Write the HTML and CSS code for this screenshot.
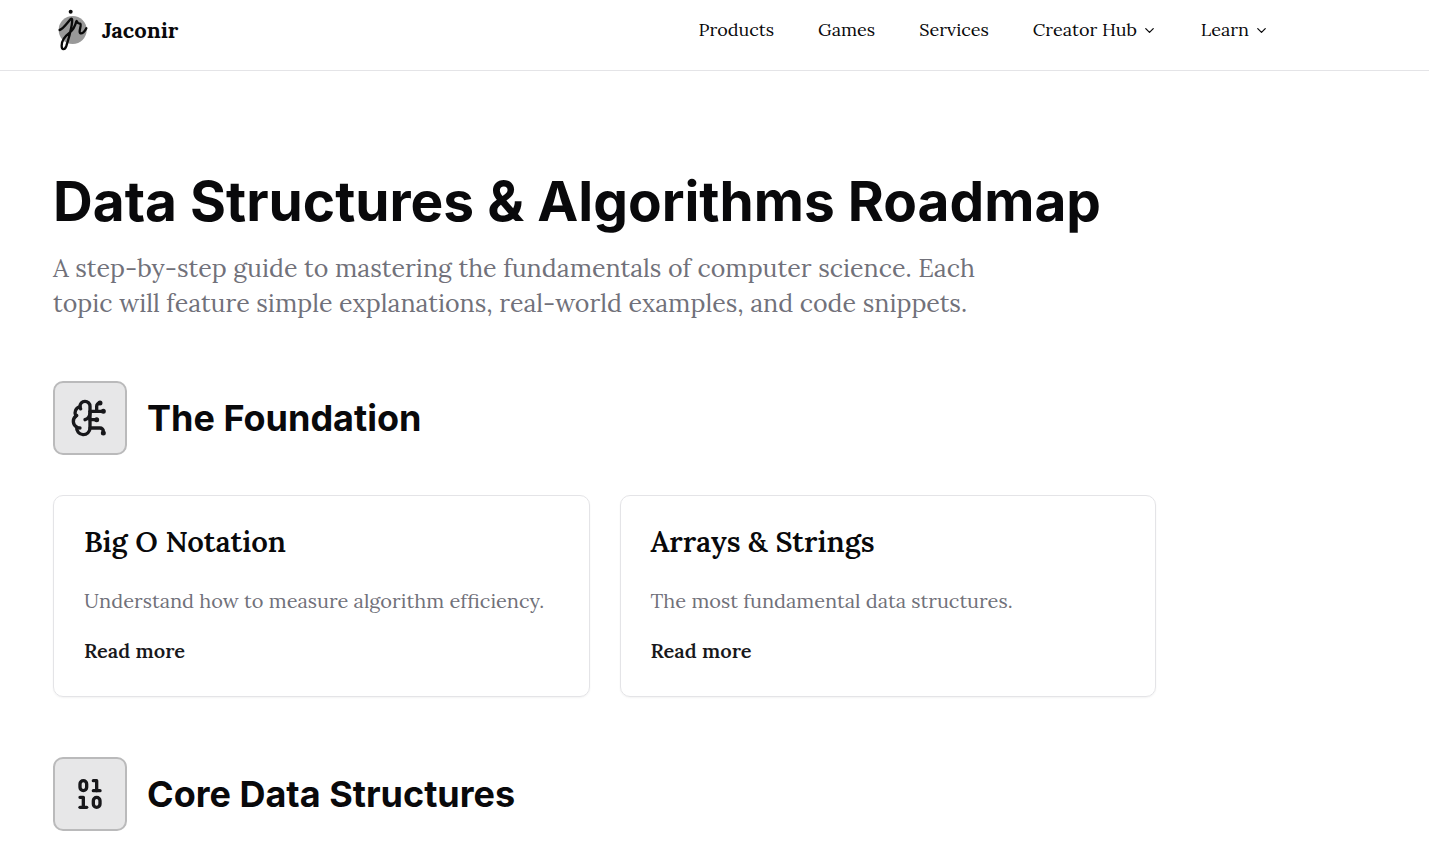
FILE: index.html
```
<!DOCTYPE html>
<html lang="en">
<head>
    <meta charset="UTF-8">
    <meta name="viewport" content="width=device-width, initial-scale=1.0">
    <title>Data Structures & Algorithms Roadmap - Jaconir</title>
    <link rel="stylesheet" href="styles.css">
</head>
<body>
    <header class="site-header">
        <a class="brand" href="#">
            <svg class="brand-logo" viewBox="54 27 90 126" aria-hidden="true">
                <circle cx="98" cy="90" r="42" fill="#999"/>
                <circle cx="92" cy="35" r="6" fill="#0a0a0a"/>
                <path d="M59 90C70 87 83 67 92 57C98 53 97 64 95 76C91 98 86 118 79 138C74 151 65 150 65 137C65 119 76 108 88 99C101 89 106 77 109 64C112 60 110 72 120 71C127 73 115 94 120 99C126 103 135 94 139 85" fill="none" stroke="#0a0a0a" stroke-width="7" stroke-linecap="round" stroke-linejoin="round"/>
            </svg>
            <span class="brand-name">Jaconir</span>
        </a>
        <nav class="main-nav">
            <a class="nav-link" href="#">Products</a>
            <a class="nav-link" href="#">Games</a>
            <a class="nav-link" href="#">Services</a>
            <button class="nav-link" type="button">Creator Hub
                <svg class="chevron" viewBox="0 0 24 24" aria-hidden="true"><path d="m6 9 6 6 6-6"/></svg>
            </button>
            <button class="nav-link" type="button">Learn
                <svg class="chevron" viewBox="0 0 24 24" aria-hidden="true"><path d="m6 9 6 6 6-6"/></svg>
            </button>
        </nav>
    </header>

    <main class="container">
        <div class="intro">
            <h1>Data Structures &amp; Algorithms Roadmap</h1>
            <p>A step-by-step guide to mastering the fundamentals of computer science. Each topic will feature simple explanations, real-world examples, and code snippets.</p>
        </div>

        <section class="topic">
            <div class="topic-header">
                <div class="topic-icon">
                    <svg viewBox="0 0 24 24" aria-hidden="true">
                        <path d="M12 5a3 3 0 1 0-5.997.125 4 4 0 0 0-2.526 5.77 4 4 0 0 0 .556 6.588A4 4 0 1 0 12 18Z"/>
                        <path d="M9 13a4.5 4.5 0 0 0 3-4"/>
                        <path d="M6.003 5.125A3 3 0 0 0 6.401 6.5"/>
                        <path d="M3.477 10.896a4 4 0 0 1 .585-.396"/>
                        <path d="M6 18a4 4 0 0 1-1.967-.516"/>
                        <path d="M12 13h4"/>
                        <path d="M12 18h6a2 2 0 0 1 2 2v1"/>
                        <path d="M12 8h8"/>
                        <path d="M16 8V5a2 2 0 0 1 2-2"/>
                        <circle cx="16" cy="13" r=".5"/>
                        <circle cx="18" cy="3" r=".5"/>
                        <circle cx="20" cy="21" r=".5"/>
                        <circle cx="20" cy="8" r=".5"/>
                    </svg>
                </div>
                <h2>The Foundation</h2>
            </div>
            <div class="card-grid">
                <article class="card">
                    <h3>Big O Notation</h3>
                    <p>Understand how to measure algorithm efficiency.</p>
                    <a class="read-more" href="#">Read more</a>
                </article>
                <article class="card">
                    <h3>Arrays &amp; Strings</h3>
                    <p>The most fundamental data structures.</p>
                    <a class="read-more" href="#">Read more</a>
                </article>
            </div>
        </section>

        <section class="topic">
            <div class="topic-header">
                <div class="topic-icon">
                    <svg viewBox="0 0 24 24" aria-hidden="true">
                        <rect x="14" y="14" width="4" height="6" rx="2"/>
                        <rect x="6" y="4" width="4" height="6" rx="2"/>
                        <path d="M6 20h4"/>
                        <path d="M14 10h4"/>
                        <path d="M6 14h2v6"/>
                        <path d="M14 4h2v6"/>
                    </svg>
                </div>
                <h2>Core Data Structures</h2>
            </div>
        </section>
    </main>
</body>
</html>
```
FILE: styles.css
```
:root {
    --text: #09090b;
    --primary: #18181b;
    --muted: #71717a;
    --border: #e4e4e7;
    --serif: Lora, "Liberation Serif", serif;
    --sans: Inter, "Liberation Sans", sans-serif;
}

* {
    box-sizing: border-box;
}

body {
    margin: 0;
    font-family: var(--serif);
    color: var(--text);
    background: #fff;
}

h1, h2, h3, p {
    margin: 0;
}

a {
    color: inherit;
    text-decoration: none;
}

.site-header {
    display: flex;
    align-items: center;
    justify-content: space-between;
    padding: 9px 160px 19px 58px;
    border-bottom: 1px solid var(--border);
}

.brand {
    display: flex;
    align-items: center;
    gap: 14px;
}

.brand-logo {
    width: 30px;
    height: 42px;
}

.brand-name {
    font-size: 22px;
    line-height: 32px;
    font-weight: 700;
}

.main-nav {
    display: flex;
    align-items: center;
    gap: 44px;
}

.nav-link {
    display: flex;
    align-items: center;
    gap: 5px;
    padding: 0;
    border: 0;
    background: none;
    font-family: inherit;
    font-size: 18px;
    line-height: 24px;
    color: var(--text);
    cursor: pointer;
}

.chevron {
    width: 15px;
    height: 15px;
    fill: none;
    stroke: currentColor;
    stroke-width: 2;
    stroke-linecap: round;
    stroke-linejoin: round;
}

.container {
    max-width: 1209px;
    padding: 100px 53px 0;
}

.intro {
    margin-bottom: 60px;
}

.intro h1 {
    margin-bottom: 20px;
    font-family: var(--sans);
    font-size: 55px;
    line-height: 60px;
    font-weight: 700;
}

.intro p {
    max-width: 960px;
    font-size: 25px;
    line-height: 35px;
    color: var(--muted);
}

.topic {
    margin-bottom: 60px;
}

.topic:last-child {
    margin-bottom: 0;
}

.topic-header {
    display: flex;
    align-items: center;
    gap: 20px;
}

.topic-header h2 {
    font-family: var(--sans);
    font-size: 36px;
    line-height: 45px;
    font-weight: 700;
}

.topic-icon {
    display: flex;
    padding: 15px;
    border: 2px solid #bababb;
    border-radius: 10px;
    background: #e7e7e8;
    color: var(--primary);
}

.topic-icon svg {
    width: 40px;
    height: 40px;
    fill: none;
    stroke: currentColor;
    stroke-width: 2;
    stroke-linecap: round;
    stroke-linejoin: round;
}

.card-grid {
    display: grid;
    grid-template-columns: 1fr 1fr;
    gap: 30px;
    margin-top: 40px;
}

.card {
    padding: 30px;
    border: 1px solid var(--border);
    border-radius: 10px;
    box-shadow: 0 1px 2px rgba(0, 0, 0, 0.05);
}

.card h3 {
    margin-bottom: 28px;
    font-size: 29px;
    line-height: 32px;
    font-weight: 600;
}

.card p {
    margin-bottom: 20px;
    font-size: 20px;
    line-height: 30px;
    color: var(--muted);
}

.read-more {
    display: block;
    font-size: 20px;
    line-height: 30px;
    font-weight: 600;
    color: var(--primary);
}
```
